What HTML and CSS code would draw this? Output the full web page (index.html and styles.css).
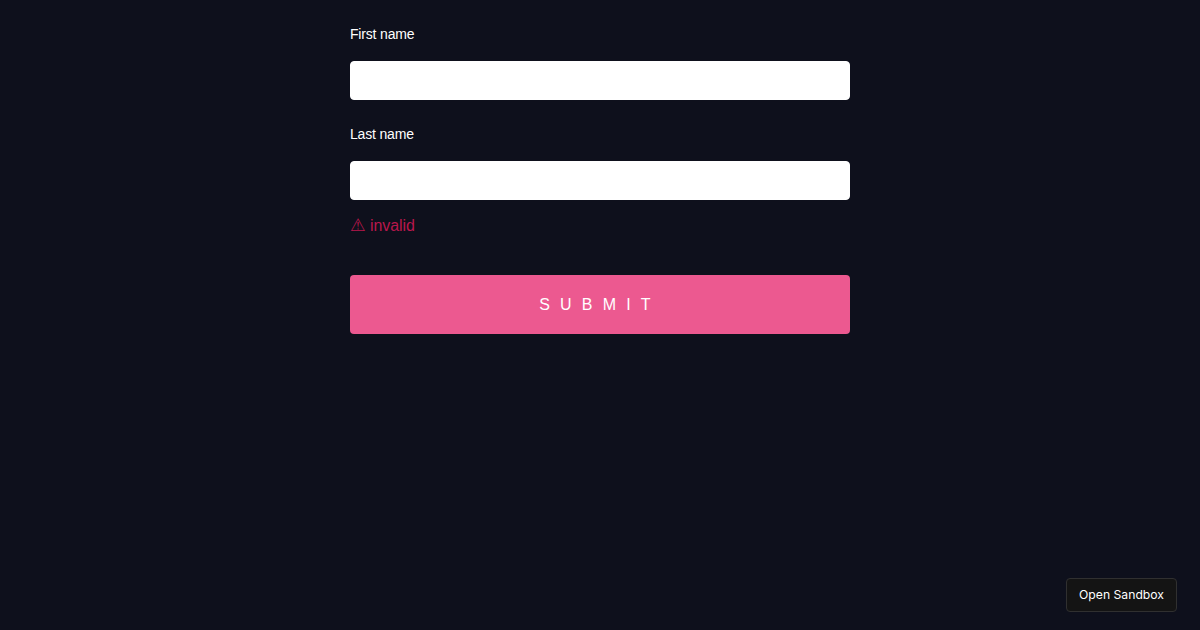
FILE: index.html
```html
<!DOCTYPE html>
<html lang="en">
<head>
<meta charset="utf-8">
<title>Form</title>
<link rel="stylesheet" href="styles.css">
</head>
<body>
<div class="page">
  <form class="form">
    <label class="label" for="first">First name</label>
    <input class="input" id="first" type="text">
    <label class="label" for="last">Last name</label>
    <input class="input" id="last" type="text">
    <p class="error"><span class="error-icon">⚠</span> invalid</p>
    <button class="submit" type="button">Submit</button>
  </form>
  <button class="sandbox" type="button">Open Sandbox</button>
</div>
</body>
</html>
```
FILE: styles.css
```css
* { box-sizing: border-box; }
html, body { margin: 0; height: 100%; }
body {
  background: #0e101c;
  font-family: "Liberation Sans", Arial, sans-serif;
  overflow: hidden;
}
.page { position: relative; height: 630px; }
.form {
  display: flex;
  flex-direction: column;
  width: 500px;
  margin: 0 auto;
  padding-top: 20px;
}
.label {
  display: block;
  height: 28px;
  line-height: 28px;
  margin-bottom: 13px;
  color: #fff;
  font-size: 14px;
  font-weight: 200;
  letter-spacing: -0.18px;
}
.input {
  display: block;
  width: 100%;
  height: 39px;
  margin-bottom: 20px;
  padding: 10px 15px;
  background: #fff;
  border: 1px solid #fff;
  border-radius: 4px;
  font-size: 14px;
}
.input:last-of-type { margin-bottom: 10px; }
.error {
  margin: 0;
  height: 32px;
  line-height: 32px;
  color: #b8174c;
  font-size: 16px;
  letter-spacing: -0.1px;
}
.error-icon {
  font-family: "DejaVu Sans", sans-serif;
  font-size: 17.6px;
  line-height: 1;
}
.submit {
  display: block;
  width: 100%;
  height: 59px;
  margin-top: 33px;
  background: #ec5990;
  border: 0;
  border-radius: 4px;
  color: #fff;
  font-family: "Liberation Sans", Arial, sans-serif;
  font-size: 16px;
  font-weight: 100;
  letter-spacing: 10.2px;
  text-transform: uppercase;
}
.sandbox {
  position: absolute;
  right: 23px;
  bottom: 18px;
  width: 111px;
  height: 34px;
  padding: 0 0 2px;
  background: #141414;
  border: 1px solid #303030;
  border-radius: 4px;
  color: #fff;
  font-family: Inter, sans-serif;
  font-size: 12.2px;
}
```
